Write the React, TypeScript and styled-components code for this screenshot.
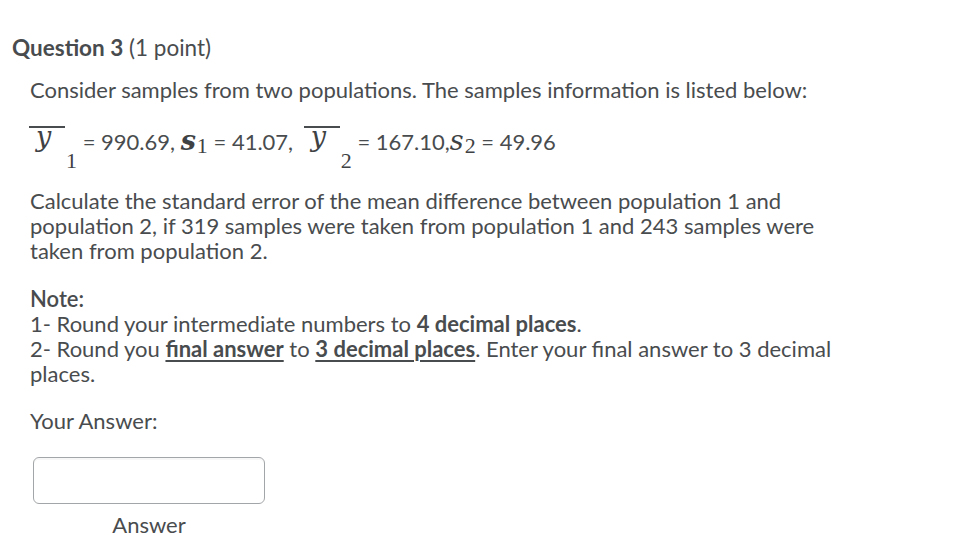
import React from 'react';
import styled, { createGlobalStyle } from 'styled-components';

const GlobalStyle = createGlobalStyle`
  body {
    margin: 0;
    background: #ffffff;
    font-family: Lato, "Open Sans", sans-serif;
    color: #494c4e;
  }
`;

const Page = styled.div`
  padding: 34px 12px 0 12px;
`;

const Heading = styled.h2`
  margin: 0;
  font-size: 22.5px;
  font-weight: 400;
  line-height: 28px;

  strong {
    font-weight: 700;
  }
`;

const Body = styled.div`
  padding: 0 0 0 18px;
  font-size: 22px;
  line-height: 25px;
`;

const Para = styled.p<{ $top?: number }>`
  margin: ${(p) => p.$top ?? 0}px 0 0 0;
`;

const NoteTitle = styled.p`
  margin: 0;
  font-weight: 600;
`;

/* equation line: tall strut so the sub/superscripts never move the baseline */
const MathRow = styled.div`
  margin: 10px 0 0 0;
  height: 60px;
  line-height: 60px;
  white-space: nowrap;
`;

const BarVar = styled.span<{ $gap?: number }>`
  display: inline-block;
  box-sizing: border-box;
  width: 36px;
  margin-left: ${(p) => p.$gap ?? -1}px;
  padding-left: 7px;
  border-top: 2px solid #494c4e;
  font-family: "DejaVu Serif", "Liberation Serif", serif;
  font-style: italic;
  font-size: 27px;
  line-height: 18px;
  vertical-align: 4px;
  color: #3f4244;
`;

const Var = styled.span<{ $bold?: boolean }>`
  font-family: "DejaVu Serif", "Liberation Serif", serif;
  font-style: italic;
  font-weight: ${(p) => (p.$bold ? 700 : 400)};
  font-size: 27px;
  line-height: 0;
  color: #3f4244;
`;

const Sub = styled.span<{ $drop: number }>`
  font-family: "Liberation Serif", "DejaVu Serif", serif;
  font-size: 22px;
  line-height: 0;
  vertical-align: ${(p) => -p.$drop}px;
  margin-left: 1px;
  color: #3f4244;
`;

const Eq = styled.span`
  line-height: 0;
`;

const Note = styled.div`
  margin-top: 23px;
`;

const Bold = styled.span`
  font-weight: 700;
  line-height: 0;
`;

const Under = styled.span`
  font-weight: 700;
  line-height: 0;
  text-decoration: underline;
  text-decoration-thickness: 2px;
  text-underline-offset: 3px;
`;

const AnswerBlock = styled.div`
  margin-top: 22.5px;
`;

const AnswerField = styled.div`
  margin: 24px 0 0 3px;
  width: 232px;
  display: flex;
  flex-direction: column;
  align-items: center;
  gap: 8px;
`;

const Input = styled.input`
  box-sizing: border-box;
  width: 232px;
  height: 47px;
  border: 1px solid #a3a6a9;
  border-radius: 6px;
  background: #ffffff;
  box-shadow: inset 0 2px 0 rgba(0, 0, 0, 0.03);
  outline: none;
`;

const Caption = styled.span`
  font-size: 22px;
  line-height: 25px;
`;

export default function App() {
  return (
    <>
      <GlobalStyle />
      <Page>
        <Heading>
          <strong>Question 3</strong> (1 point)
        </Heading>
        <Body>
          <Para $top={14.5}>
            Consider samples from two populations. The samples information is listed below:
          </Para>
          <MathRow>
            <BarVar>y</BarVar>
            <Sub $drop={18}>1</Sub>
            <Eq> = 990.69, </Eq>
            <Var $bold>s</Var>
            <Sub $drop={3}>1</Sub>
            <Eq> = 41.07, </Eq>
            <BarVar $gap={5}>y</BarVar>
            <Sub $drop={18}>2</Sub>
            <Eq> = 167.10,</Eq>
            <Var>s</Var>
            <Sub $drop={3}>2</Sub>
            <Eq> = 49.96</Eq>
          </MathRow>
          <Para $top={16}>
            Calculate the standard error of the mean difference between population 1 and
            <br />
            population 2, if 319 samples were taken from population 1 and 243 samples were
            <br />
            taken from population 2.
          </Para>
          <Note>
            <NoteTitle>Note:</NoteTitle>
            <Para>
              1- Round your intermediate numbers to <Bold>4 decimal places</Bold>.
            </Para>
            <Para>
              2- Round you <Under>final answer</Under> to <Under>3 decimal places</Under>. Enter your
              final answer to 3 decimal
              <br />
              places.
            </Para>
          </Note>
          <AnswerBlock>
            <Para>Your Answer:</Para>
            <AnswerField>
              <Input type="text" aria-label="Answer" />
              <Caption>Answer</Caption>
            </AnswerField>
          </AnswerBlock>
        </Body>
      </Page>
    </>
  );
}
